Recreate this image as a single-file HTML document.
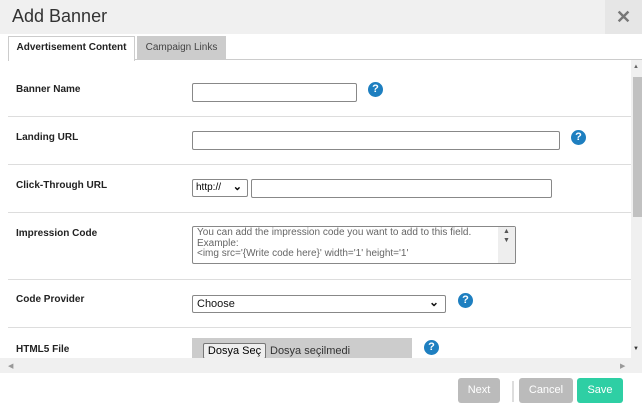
<!DOCTYPE html>
<html><head><style>
*{box-sizing:border-box;margin:0;padding:0}
body{width:642px;height:405px;overflow:hidden;background:#fff;font-family:"Liberation Sans",Arial,sans-serif;position:relative}
.a{position:absolute}
.hdr{left:0;top:0;width:642px;height:34px;background:#f0f0f0}
.ttl{left:12px;top:6px;font-size:18px;color:#333}
.cls{left:605px;top:0;width:37px;height:34px;background:#e6e6e6;color:#777;font-size:18px;text-align:center;line-height:34px;font-weight:bold}
.tab{top:36px;height:24px;font-size:10px;text-align:center;line-height:22px;border:1px solid #ccc;border-bottom:none}
.lbl{left:16px;font-size:10px;font-weight:bold;color:#222}
.inp{border:1px solid #888;border-radius:2px;background:#fff}
.sep{left:8px;width:623px;height:1px;background:#ddd}
.q{width:15px;height:15px;border-radius:50%;background:#1e7fc0;color:#fff;font-size:11px;font-weight:bold;text-align:center;line-height:15px}
.btn{top:378px;height:25px;border-radius:3px;color:#fff;font-size:11px;text-align:center;line-height:25px}
</style></head><body>
<div class="a hdr"></div>
<div class="a ttl">Add Banner</div>
<div class="a cls">✕</div>
<div class="a" style="left:8px;top:59px;width:634px;height:1px;background:#ccc"></div>
<div class="a tab" style="left:8px;width:127px;background:#fff;height:25px;font-weight:bold;color:#222">Advertisement Content</div>
<div class="a tab" style="left:137px;width:89px;background:#ccc;color:#444">Campaign Links</div>

<div class="a lbl" style="top:84px">Banner Name</div>
<div class="a inp" style="left:192px;top:83px;width:165px;height:19px"></div>
<div class="a q" style="left:368px;top:82px">?</div>
<div class="a sep" style="top:116px"></div>

<div class="a lbl" style="top:132px">Landing URL</div>
<div class="a inp" style="left:192px;top:131px;width:368px;height:19px"></div>
<div class="a q" style="left:571px;top:130px">?</div>
<div class="a sep" style="top:164px"></div>

<div class="a lbl" style="top:180px">Click-Through URL</div>
<div class="a inp" style="left:192px;top:179px;width:56px;height:18px;font-size:10px;padding:2px 0 0 3px">http://<span style="position:absolute;right:5px;top:0px;font-size:11px;font-weight:bold">⌄</span></div>
<div class="a inp" style="left:251px;top:179px;width:301px;height:19px"></div>
<div class="a sep" style="top:212px"></div>

<div class="a lbl" style="top:228px">Impression Code</div>
<div class="a inp" style="left:192px;top:226px;width:324px;height:38px;font-size:10px;color:#666;padding:1px 4px;line-height:10.5px;overflow:hidden">You can add the impression code you want to add to this field.<br>Example:<br>&lt;img src='{Write code here}' width='1' height='1'</div>
<div class="a" style="left:498px;top:227px;width:17px;height:36px;background:#eee;font-size:7px;color:#555;text-align:center;line-height:9px">▲<br>▼</div>
<div class="a sep" style="top:279px"></div>

<div class="a lbl" style="top:294px">Code Provider</div>
<div class="a inp" style="left:192px;top:295px;width:254px;height:18px;font-size:11px;color:#111;padding:2px 0 0 4px">Choose<span style="position:absolute;right:6px;top:-1px;font-weight:bold;font-size:12px">⌄</span></div>
<div class="a q" style="left:458px;top:293px">?</div>
<div class="a sep" style="top:327px"></div>

<div class="a lbl" style="top:344px">HTML5 File</div>
<div class="a" style="left:192px;top:338px;width:220px;height:22px;background:#ccc"></div>
<div class="a" style="left:203px;top:343px;width:63px;height:16px;border:1px solid #777;border-radius:2px;background:#efefef;font-size:11px;text-align:center;line-height:14px">Dosya Seç</div>
<div class="a" style="left:270px;top:345px;font-size:11px;color:#333">Dosya seçilmedi</div>
<div class="a q" style="left:424px;top:340px">?</div>

<div class="a" style="left:631px;top:60px;width:11px;height:298px;background:#f0f0f0"></div>
<div class="a" style="left:633px;top:77px;width:9px;height:140px;background:#c1c1c1"></div>
<div class="a" style="left:633px;top:64px;font-size:6px;color:#666">▲</div>
<div class="a" style="left:633px;top:346px;font-size:6px;color:#333">▼</div>
<div class="a" style="left:0;top:358px;width:642px;height:15px;background:#f0f0f0"></div>
<div class="a" style="left:8px;top:362px;font-size:7px;color:#999">◀</div>
<div class="a" style="left:620px;top:362px;font-size:7px;color:#999">▶</div>

<div class="a btn" style="left:458px;width:42px;background:#bbb">Next</div>
<div class="a" style="left:512px;top:381px;width:2px;height:21px;background:#ddd"></div>
<div class="a btn" style="left:519px;width:54px;background:#bbb">Cancel</div>
<div class="a btn" style="left:577px;width:46px;background:#2ecfa4">Save</div>
</body></html>
